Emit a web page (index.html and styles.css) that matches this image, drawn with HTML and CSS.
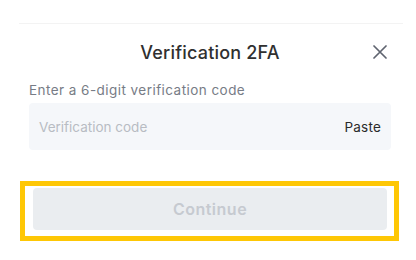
FILE: index.html
```html
<!DOCTYPE html>
<html>
<head>
<meta charset="utf-8">
<link rel="stylesheet" href="styles.css">
</head>
<body>
<div class="page">
  <div class="rule"></div>
  <div class="header">
    <span></span>
    <h1 class="title">Verification 2FA</h1>
    <button class="close" aria-label="Close">
      <svg width="14" height="14" viewBox="0 0 14 14"><path d="M1 1L13 13M13 1L1 13" stroke="#5f6470" stroke-width="1.7" stroke-linecap="round"/></svg>
    </button>
  </div>
  <div class="form">
    <label class="label">Enter a 6-digit verification code</label>
    <div class="field">
      <span class="placeholder">Verification code</span>
      <span class="paste">Paste</span>
    </div>
    <div class="action">
      <button class="continue">Continue</button>
      <div class="highlight"></div>
    </div>
  </div>
</div>
</body>
</html>
```
FILE: styles.css
```css
html, body { margin: 0; padding: 0; background: #fff; }
body { font-family: "Inter", "Noto Sans", sans-serif; width: 416px; height: 260px; overflow: hidden; }
.page { padding-top: 23px; }
.rule { height: 1px; background: #f3f3f3; margin: 0 13px 0 19px; }
.header { display: grid; grid-template-columns: 1fr auto 1fr; align-items: center; padding: 0 25px 0 29px; height: 56px; }
.title { margin: 0; font-size: 18px; font-weight: 500; color: #303030; letter-spacing: 0.2px; }
.close { justify-self: end; margin-right: 4px; background: none; border: 0; padding: 0; width: 14px; height: 14px; display: flex; }
.form { padding: 0 25px 0 29px; }
.label { display: block; font-size: 13.5px; color: #777c86; line-height: 18px; margin-top: 1px; letter-spacing: 0.45px; }
.field { margin-top: 4px; height: 47px; background: #f5f7fa; border-radius: 4px; display: flex; align-items: center; justify-content: space-between; padding: 0 10px 0 10px; box-sizing: border-box; font-size: 13.5px; }
.placeholder { color: #b8bcc3; }
.paste { color: #2a2a2a; letter-spacing: 0.2px; }
.action { position: relative; margin-top: 38px; padding: 0 4px; }
.continue { display: block; width: 100%; height: 42px; border: 0; border-radius: 4px; background: #eaedf0; color: #c6cad0; font-family: inherit; font-size: 16px; font-weight: 600; letter-spacing: 0.5px; }
.highlight { position: absolute; left: -9px; top: -7px; width: 379px; height: 60px; box-sizing: border-box; border: 5px solid #fec705; pointer-events: none; }
```
